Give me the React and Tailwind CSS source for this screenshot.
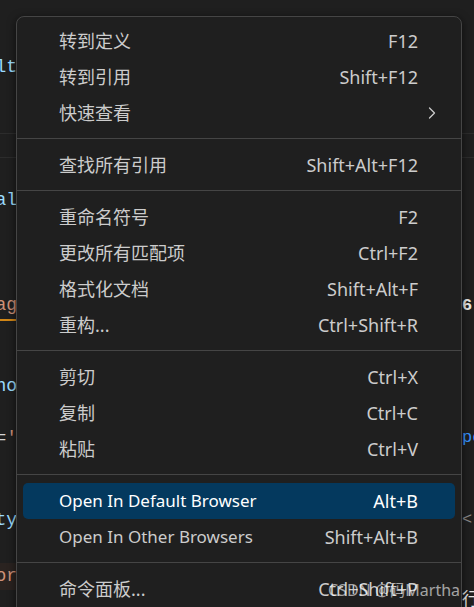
import { ChevronRight } from 'lucide-react'

const ui = { fontFamily: '"Noto Sans", "Noto Sans CJK SC", sans-serif' }
const mono = { fontFamily: '"Liberation Mono", "Noto Sans CJK SC", monospace' }

// editor lines behind the menu: height, clipped left text, right text
const lines = [
  { h: 54 },
  { h: 26, left: <span className="text-[#9cdcfe]">default</span> },
  { h: 53 },
  { h: 25, current: true },
  { h: 29 },
  { h: 26, left: <span className="text-[#9cdcfe]">normal</span> },
  { h: 80 },
  {
    h: 26,
    left: <span className="text-[#ce9178] border-b-2 border-[#d18616]">messag</span>,
    right: <span className="text-[#e6e6e6] font-bold">6:</span>,
  },
  { h: 54 },
  { h: 26, left: <span className="text-[#9cdcfe]">metho</span> },
  { h: 26 },
  {
    h: 26,
    left: <span><span className="text-[#d4d4d4]">=</span><span className="text-[#ce9178]">'</span></span>,
    right: <span className="text-[#3794ff]">pe</span>,
  },
  { h: 56 },
  {
    h: 26,
    left: <span className="text-[#9cdcfe]">property</span>,
    right: <span className="text-[#8a8a8a]">&lt;</span>,
  },
  { h: 32 },
  { h: 22, left: <span className="text-[#ce9178] bg-[#2a2320]">color</span> },
  { h: 26, right: <span className="text-[#e6e6e6] text-[17px]" style={ui}>行</span> },
]

const groups = [
  [
    { label: '转到定义', key: 'F12' },
    { label: '转到引用', key: 'Shift+F12' },
    { label: '快速查看', sub: true },
  ],
  [{ label: '查找所有引用', key: 'Shift+Alt+F12' }],
  [
    { label: '重命名符号', key: 'F2' },
    { label: '更改所有匹配项', key: 'Ctrl+F2' },
    { label: '格式化文档', key: 'Shift+Alt+F' },
    { label: '重构...', key: 'Ctrl+Shift+R' },
  ],
  [
    { label: '剪切', key: 'Ctrl+X' },
    { label: '复制', key: 'Ctrl+C' },
    { label: '粘贴', key: 'Ctrl+V' },
  ],
  [
    { label: 'Open In Default Browser', key: 'Alt+B', active: true, latin: true },
    { label: 'Open In Other Browsers', key: 'Shift+Alt+B', latin: true },
  ],
  [{ label: '命令面板...', key: 'Ctrl+Shift+P' }],
]

function MenuItem({ item }) {
  return (
    <div
      className={`mx-[6px] h-[36px] rounded-[5px] flex items-center justify-between pl-[36px] pr-[37px] text-[18px] ${
        item.active ? 'bg-[#04395e] text-white' : 'text-[#cccccc]'
      }`}
    >
      <span className={item.latin ? 'text-[17px]' : ''}>{item.label}</span>
      {item.sub ? (
        <ChevronRight size={20} strokeWidth={1.5} className="-mr-[24px] text-[#cccccc]" />
      ) : (
        <span>{item.key}</span>
      )}
    </div>
  )
}

export default function App() {
  return (
    <div className="relative h-[607px] w-[474px] overflow-hidden bg-[#1f1f1f]">
      <div className="flex flex-col text-[18px]" style={mono}>
        {lines.map((l, i) => (
          <div
            key={i}
            className={`flex items-center justify-between ${l.current ? 'border-y border-[#2c2c2c]' : ''}`}
            style={{ height: l.h }}
          >
            <div className="w-[17px] flex justify-end overflow-hidden whitespace-nowrap">{l.left}</div>
            <div className="w-[12px] overflow-hidden whitespace-nowrap text-[17px]">{l.right}</div>
          </div>
        ))}
      </div>

      {/* context menu */}
      <div
        className="absolute left-[16px] top-[16px] w-[446px] h-[640px] rounded-[8px] border border-[#454545] bg-[#1f1f1f] pt-[6px] shadow-[0_2px_8px_rgba(0,0,0,0.6)]"
        style={ui}
      >
        {groups.map((g, gi) => (
          <div key={gi}>
            {gi > 0 && <div className="mt-[7px] mb-[8px] h-px bg-[#454545]" />}
            {g.map((item, ii) => (
              <MenuItem key={ii} item={item} />
            ))}
          </div>
        ))}
      </div>

      {/* watermark */}
      <div
        className="absolute left-[328px] top-[578px] text-[16px] text-white/60 whitespace-nowrap"
        style={ui}
      >
        CSDN @码Martha
      </div>
    </div>
  )
}
